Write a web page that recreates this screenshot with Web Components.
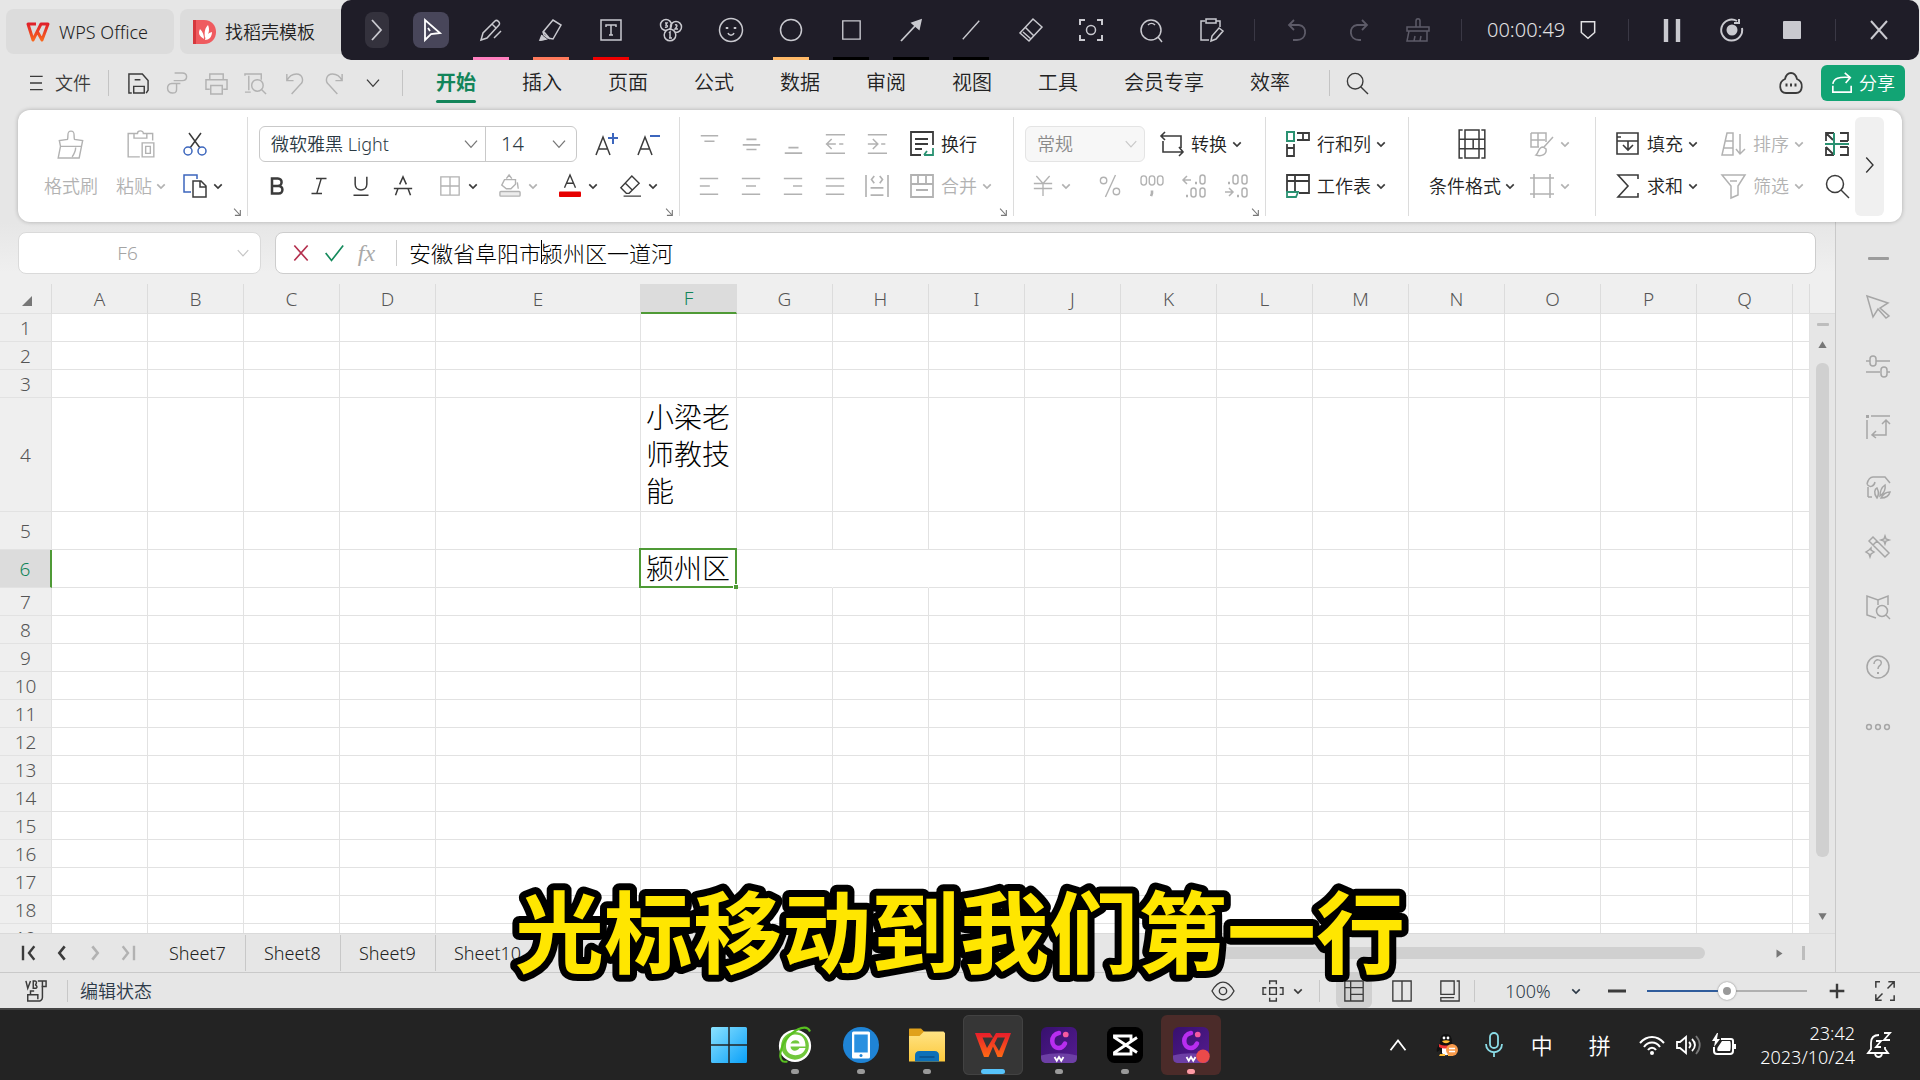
<!DOCTYPE html>
<html lang="zh-CN">
<head>
<meta charset="utf-8">
<title>WPS Office</title>
<style>
  html, body { height: 100%; margin: 0; }
  body {
    display: flex;
    flex-direction: column;
    position: relative;
    overflow: hidden;
    background: #e6e6e6;
    color: #2b2b2b;
    font: 350 18px/24px "Noto Sans", "Noto Sans CJK SC", sans-serif;
    --ink: #3b3b3b;
    --muted: #b2b2b2;
    --line: #cfcfcf;
    --grid: #e2e2e2;
    --green: #12855a;
    --select: #4f9a36;
    --blue: #3c66bd;
  }
  .workspace { flex: 1; display: flex; min-height: 0; }
  .document { flex: 1; min-width: 0; display: flex; flex-direction: column; background: linear-gradient(#e6e6e6, #efefef 50px); }
</style>
</head>
<body>
  <title-bar></title-bar>
  <menu-bar></menu-bar>
  <ribbon-bar></ribbon-bar>
  <div class="workspace">
    <div class="document">
      <formula-bar></formula-bar>
      <sheet-grid></sheet-grid>
      <sheet-tabs></sheet-tabs>
    </div>
    <side-rail></side-rail>
  </div>
  <status-bar></status-bar>
  <task-bar></task-bar>
  <video-caption text="光标移动到我们第一行"></video-caption>

<script>
const ICONS = {
  down: '<path stroke-width="2" d="M3 7l9 10 9-10"/>',
  downBold: '<path stroke-width="4" d="M3 8l9 9 9-9"/>',
  right: '<path stroke-width="1.800" d="M7 2l9 10-9 10"/>',
  leftBold: '<path stroke-width="4" d="M16 2L8 12l8 10"/>',
  rightBold: '<path stroke-width="4" d="M8 2l8 10-8 10"/>',
  firstBold: '<path stroke-width="3.600" d="M3 1v22M20 2l-8 10 8 10"/>',
  lastBold: '<path stroke-width="3.600" d="M21 1v22M4 2l8 10-8 10"/>',
  up: '<path stroke-width="2.4" d="M2 19L12 6l10 13"/>',
  corner: '<path stroke-width="2.6" d="M5 4l13 14M20 7v13H7"/>',
  triUp: '<path fill="currentColor" stroke="none" d="M12 3l11 18H1z"/>',
  triDown: '<path fill="currentColor" stroke="none" d="M12 21L1 3h22z"/>',
  triLeft: '<path fill="currentColor" stroke="none" d="M4 12L20 1v22z"/>',
  triRight: '<path fill="currentColor" stroke="none" d="M20 12L4 1v22z"/>',
  close: '<path stroke-width="2" d="M4 3l16 18M20 3L4 21"/>',
  check: '<path stroke-width="2" d="M2 12l7 9L23 3"/>',
  selectAll: '<path fill="currentColor" stroke="none" d="M24 0v24H0z"/>',

  // recorder
  cursor: '<path stroke-width="1.8" d="M6 2v20l6-6 9-1z M9 10l2 3"/>',
  pencil: '<path d="M2 22l2-7L16 3c2-2 6 2 4 4L8 20zM13 6l4 4M15 20l7-7"/>',
  marker: '<path d="M5 17l-1-3L14 2l8 5-8 14-5-1zM5 14l6 7M3 17l-2 5 6-1" /><path fill="currentColor" d="M3 18l4 3-5 1z"/>',
  textBox: '<path d="M2 2h20v20H2zM7 9V7h10v2M12 7v10M10 17h4"/>',
  steps: '<circle cx="7" cy="7" r="5.5"/><circle cx="17" cy="9" r="5.5"/><circle cx="11" cy="17" r="5.8" fill="#1f1d28"/><path d="M6 5h2l-1 2c2 0 2 3-1 2M16 7c3-1 2 2 0 4h3M10 15l1-1v6M10 20h3"/>',
  smile: '<circle cx="12" cy="12" r="11.5"/><path d="M9 15c1 3 5 3 6 0"/><path stroke-width="2.5" d="M8 9v2M16 9v2"/>',
  circle: '<circle cx="12" cy="12" r="10.5"/>',
  rect: '<path d="M3 2h19v20H3z"/>',
  arrow: '<path stroke-width="1.8" d="M2 23L17 7"/><path fill="currentColor" d="M22 2l-2 9-7-6z"/>',
  line: '<path d="M3 22L21 2"/>',
  eraser: '<path d="M14 1l9 8-13 14-9-8zM6 9l9 9M4 14l8 7"/>',
  focus: '<path stroke-width="2" d="M1 7V2h5M18 2h5v5M23 17v5h-5M6 22H1v-5"/><circle cx="12" cy="12" r="4.5"/>',
  zoomArc: '<circle cx="12" cy="12" r="10"/><path d="M9 7c2-2 5-2 7 0M19 19l4 5"/>',
  clip: '<path d="M6 3H2v19h8M17 3h4v6M7 1h10v4H7zM12 23l1-5 7-8 4 3-7 8z"/>',
  undo: '<path stroke-width="1.8" d="M8 2L3 7l5 5M3 7h10c9 1 8 15-2 15H7"/>',
  redo: '<path stroke-width="1.8" d="M16 2l5 5-5 5M21 7H11C2 8 3 22 13 22h2"/>',
  broom: '<path d="M10 9V3c0-3 4-3 4 0v6M1 9h22v4H1zM3 13l-2 10h20V13M8 23l1-5M14 23l1-5"/>',
  flag: '<path stroke-width="1.8" d="M4 2h16v13l-8 7-8-7z"/>',
  pause: '<path stroke-width="4.4" d="M6 1v23M18 1v23"/>',
  record: '<path stroke-width="2" d="M17 3a10.500 10.500 0 1 0 5 7M19 1l0 4-5 0"/><circle cx="12" cy="12" r="5.500" fill="currentColor" stroke="none"/>',
  stop: '<rect x="3" y="3" width="18" height="18" rx="1" fill="currentColor" stroke="none"/>',

  // menu
  menu: '<path stroke-width="2" d="M3 2h19M3 12h18M3 22h19"/>',
  save: '<path d="M5 22H2V2h14l6 7v10l-2 3M7 22v-7h11v7zM8 8h6"/>',
  link: '<path d="M8 9h9c6 0 6-8 0-8H9M15 12H6c-6 0-6 10 1 10 5 0 4-3 4-10"/>',
  print: '<path d="M5 8V2h14v6M5 18H1V8h22v10h-4M6 14h12v9H6z"/>',
  preview: '<path d="M7 21H1M5 19V4M1 4V2h17v6"/><circle cx="14" cy="14" r="6"/><path d="M18 18l5 5"/>',
  back: '<path d="M4 2v7h7M4 9c2-4 5-7 10-7 7 0 8 8 4 11l-9 10"/>',
  forward: '<path d="M21 2v7h-7M21 9c-2-4-5-7-10-7-7 0-8 8-4 11l9 10"/>',
  search: '<circle cx="10" cy="10" r="8.5"/><path d="M16 16l8 8"/>',
  cloud: '<path stroke-width="1.8" d="M6 8c2-8 10-8 12 0 7 3 6 14-1 14H7C0 22-1 11 6 8z"/><path stroke-width="3" d="M6.500 14h2M11 14h2M15.500 14h2"/>',
  share: '<path stroke-width="1.800" d="M2 15v7h20v-7M2 13C3 7 8 5 21 6M15 1l6 5-5 6"/>',

  // ribbon
  brush: '<path stroke-width="1.200" d="M9 8c1-3-1-7 3-7s2 4 3 7l7 1-1 5H3L2 9zM3 14L1 24h18l2-10M16 15c0 3-1 5-3 8"/>',
  paste: '<path stroke-width="1.200" d="M6 3H1v20h10M17 3h5v6M6 7h11V3h-3c0-3-5-3-5 0H6zM13 11h10v12H13zM16 14h4v6h-4z"/>',
  cut: '<path d="M6 1l11 15M18 1L7 16"/><g stroke="#3c66bd"><circle cx="5" cy="19" r="4"/><circle cx="19" cy="19" r="4"/></g>',
  copy: '<path stroke="#3c66bd" d="M8 18H1V1h13v4"/><path d="M10 7h8l5 5v11H10zM17 7v6h6"/>',
  growA: '<path d="M2 23L9 5l7 18M5 17h8"/><path stroke="#3c66bd" stroke-width="2" d="M14 6h10M19 1v11"/>',
  shrinkA: '<path d="M2 23L9 5l7 18M5 17h8"/><path stroke="#3c66bd" stroke-width="2" d="M14 4h10"/>',
  bold: '<path stroke-width="3" d="M6 3h7c6 0 6 9 0 9H6zM6 12h8c6 0 6 9 0 9H6z"/>',
  italic: '<path stroke-width="1.800" d="M8 2h14M2 22h14M15 2L9 22"/>',
  underline: '<path stroke-width="1.800" d="M5 1v9c0 9 14 9 14 0V1M3 23h18"/>',
  strike: '<path stroke-width="1.800" d="M1 15h22M8 10l4-9 4 9M6 15l-3 8M18 15l3 8"/>',
  border: '<path stroke="#b2b2b2" stroke-width="1.600" d="M1 1h22v22H1zM12 1v22M1 12h22"/>',
  fill: '<path d="M8 4l3-4 3 4M6 5h12v5l-5 5H8l-5-4zM20 8l1 7"/><rect x="1" y="18" width="22" height="5" rx="1" fill="#ececec"/>',
  fontColor: '<path d="M6 14l6-14 6 14M8 9h8"/><rect x="0" y="18" width="24" height="6" rx="1" fill="#e60000" stroke="none"/>',
  clear: '<path d="M14 1l8 8-11 11H8l-6-6zM7 9l8 8M5 23h19"/>',
  alignTop: '<path stroke-width="1.800" d="M3 3h19M7 9h11"/>',
  alignMid: '<path stroke-width="1.800" d="M7 7h11M3 13h19M7 18h11"/>',
  alignLow: '<path stroke-width="1.800" d="M7 16h11M3 22h19"/>',
  indentOut: '<path stroke-width="1.800" d="M1 1h23M1 23h23M1 12h12M8 6l-6 6 6 6M17 12h5"/>',
  indentIn: '<path stroke-width="1.800" d="M1 1h23M1 23h23M1 12h11M7 6l6 6-6 6M17 12h5"/>',
  left: '<path stroke-width="1.800" d="M1 3h22M1 12h12M1 22h22"/>',
  center: '<path stroke-width="1.800" d="M1 3h22M6 12h12M1 22h22"/>',
  rightAlign: '<path stroke-width="1.800" d="M1 3h22M12 12h11M1 22h22"/>',
  justify: '<path stroke-width="1.800" d="M1 3h22M1 12h22M1 22h22"/>',
  spread: '<path stroke-width="1.800" d="M0 0v24M24 0v24M5 14h14M5 22h14M9 1L6 5l3 4M15 1l3 4-3 4"/>',
  wrap: '<path stroke-width="1.800" d="M23 13V0H1v23h10M5 7h13M5 12h13M5 17h7"/><path stroke="#2a9272" stroke-width="1.800" d="M23 16v7h-9M17 19l-3 4"/>',
  merge: '<path stroke-width="1.800" d="M1 1h22v22H1zM1 10h22M8 1v9M16 1v9M6 16h12"/>',
  convert: '<path stroke-width="1.600" d="M5 0L1 4l4 4M1 4h20v12M19 15l4 5-4 4M22 20H3V9"/>',
  yen: '<path stroke-width="1.600" d="M4 0l8 9 8-9M1 9h22M1 15h22M12 9v15"/>',
  percent: '<circle cx="5" cy="6" r="3.500"/><circle cx="19" cy="18" r="3.500"/><path d="M18 0L7 24"/>',
  thousand: '<rect x="0" y="1" width="6" height="10" rx="3"/><rect x="9" y="1" width="6" height="10" rx="3"/><rect x="18" y="1" width="6" height="10" rx="3"/><path stroke-width="2.800" d="M12 17v3l-1 3"/>',
  decLess: '<path d="M9 6H1M5 2L1 6l4 4"/><rect x="18" y="1" width="5" height="9" rx="2.500"/><rect x="9" y="14" width="5" height="9" rx="2.500"/><rect x="18" y="14" width="5" height="9" rx="2.500"/><path stroke-width="2.500" d="M13 9h2M4 22h2"/>',
  decMore: '<path d="M1 18h8M5 14l4 4-4 4"/><rect x="9" y="1" width="5" height="9" rx="2.500"/><rect x="18" y="1" width="5" height="9" rx="2.500"/><rect x="18" y="14" width="5" height="9" rx="2.500"/><path stroke-width="2.500" d="M4 9h2M13 22h2"/>',
  rowCol: '<path stroke="#2a9272" stroke-width="2" d="M1 0h7v9H1z"/><path stroke-width="1.800" d="M11 1h12v7H11M17 1v7M1 12v12h7V12M1 16h7"/>',
  worksheet: '<path stroke-width="1.800" d="M1 18V1h22v18H13M1 7h22M9 1v17"/><path stroke="#2a9272" stroke-width="1.800" d="M1 18h11l-2 5H1z"/>',
  condition: '<path stroke-width="1.300" d="M4 0H1v24h3M20 0h3v24h-3M1 8h22M1 16h22M6 0h12v24H6zM13 8v8"/>',
  tableStyle: '<path d="M1 1h15v9M1 1v14h8M8 1v14M1 8h14M23 5l-9 10"/><path d="M13 15c-5 0-4 6-7 8 6 2 11-1 10-6z"/>',
  frame: '<path stroke-width="1.600" d="M0 4h24M0 20h24M4 0v24M20 0v24"/>',
  fillDown: '<path stroke-width="1.600" d="M5 5H1V1h21v8H1V5M1 9v13h21V9M12 9v9M7 13l5 5 5-5"/>',
  sum: '<path stroke-width="1.600" d="M22 5V1H2l10 11L2 23h20v-4"/>',
  sort: '<path stroke-width="1.500" d="M5 1h6v22H0zM3 9h8M2 16h9M18 2v20M14 17l4 5 5-5"/>',
  filter: '<path stroke-width="1.500" d="M0 1h23l-7 11v9l-7 3V12zM8 7h7"/>',
  freeze: '<path stroke-width="1.800" d="M9 1H1v8M15 1h8v8M1 15v8h8M15 23h8v-8M1 1l7 7M1 15l7 7M15 9h8M15 15h8"/><path stroke="#2a9272" stroke-width="2" d="M9 1v22M0 12h24"/>',

  // side rail
  pointer: '<path d="M1 1l21 7-8 5 9 8-3 2-8-9-5 8z"/>',
  sliders: '<path d="M0 6h4M10 6h14M0 17h14M21 17h3"/><rect x="4" y="1" width="6" height="10" rx="3"/><rect x="15" y="12" width="6" height="10" rx="3"/>',
  resize: '<path d="M5 1h19M1 5v19M6 20h14V6M10 16l-4 4 4 3M16 9l4-4 4 4"/><path stroke-width="3" d="M0 1.500h3"/>',
  leaf: '<path d="M2 22V12M2 22h4M1 9c1-4 3-7 6-7h12l5 6M1 9c2 4 7 3 8-2M11 23c-4-5-2-9 0-10 2 4 2 7 0 10zM14 21c0-6 2-9 5-11 1 5-1 8-5 11zM15 23c2-4 5-6 9-6-1 4-4 6-9 6z"/>',
  wand: '<path d="M3 6l4-4 16 16-4 4zM7 10l4-4M5 13v2l3 2-3 2-1 3-1-3-3-2 3-2zM19 1l1 3 3 1-3 1-1 3-1-3-3-1 3-1z"/>',
  book: '<path d="M10 23L1 20V1l11 4 10-4v9M12 5v5"/><circle cx="16" cy="16" r="5.500"/><path d="M20 20l4 4"/>',
  help: '<circle cx="12" cy="12" r="11"/><path d="M8 9c0-6 9-5 7 0-1 2-3 2-3 5"/><path stroke-width="2" d="M12 17v2"/>',
  more: '<circle cx="3" cy="12" r="2.400"/><circle cx="12" cy="12" r="2.400"/><circle cx="21" cy="12" r="2.400"/>',

  // status bar
  macro: '<path stroke-width="1.600" d="M1 1l2 8 3-8M9 1v8h3c2-1 1-3-1-4 2 0 2-4 0-4zM14 1h9v6h-5M19 1v18c0 3-3 4-4 4H3v-7h11v5M6 16v-4h4"/>',
  eye: '<path d="M0 12c7-13 17-13 24 0-7 13-17 13-24 0z"/><circle cx="12" cy="12" r="4"/>',
  cross: '<path stroke-width="1.700" d="M8 4V0h8v4M8 20v4h8v-4M4 8H0v8h4M20 8h4v8h-4M8 8h8v8H8z"/>',
  viewNormal: '<path stroke-width="1.600" d="M1 0h22v24H1zM1 8h22M8 0v24M8 16h15"/>',
  viewPage: '<path stroke-width="1.600" d="M1 0h22v24H1zM12 0v24"/>',
  viewBreak: '<path stroke-width="1.600" d="M1 0h16v16H1zM20 0h3v24H1v-4h16"/>',
  minus: '<path stroke-width="4" d="M0 12h24"/>',
  plus: '<path stroke-width="3.600" d="M1 12h22M12 1v22"/>',
  expand: '<path stroke-width="1.800" d="M1 8V1h5M16 1h7v7M23 1l-8 8M1 16v7h7M1 23l8-8M23 17v6h-5"/>',

  // brands
  wps: '<defs><linearGradient id="w" x2="0" y2="1"><stop stop-color="#e0202a"/><stop offset="1" stop-color="#f8661e"/></linearGradient></defs><path stroke="url(#w)" stroke-width="3" stroke-linejoin="round" d="M10 4H2l5 16 8-16h7l-6 16-5-9"/>',
  docer: '<path fill="#ef5b5f" stroke="none" d="M1 0h11c16 0 16 24 0 24H1z"/><path fill="#d6383d" stroke="none" d="M1 0h3v24H1z"/><path fill="#fff" stroke="none" d="M12 19c-5-3-6-6-4-10 3 3 4 6 4 10zM13 18c-1-6 0-10 3-13 2 5 1 9-3 13zM13 20c1-5 3-7 7-8 0 5-3 8-7 8z"/>',
  windows: '<defs><linearGradient id="m" x2="1" y2="1"><stop stop-color="#8be2ff"/><stop offset="1" stop-color="#0aa0f8"/></linearGradient></defs><path fill="url(#m)" stroke="none" d="M0 1a1 1 0 0 1 1-1h10.500v11.500H0zM12.500 0H23a1 1 0 0 1 1 1v10.500H12.500zM0 12.500h11.500V24H1a1 1 0 0 1-1-1zM12.500 12.500H24V23a1 1 0 0 1-1 1H12.500z"/>',
  browser: '<circle cx="12" cy="12.500" r="10" fill="#71c83c" stroke="#fff"/><path fill="#fff" stroke="none" d="M12 5c5 0 7 3 7 8H9c0 3 4 4 6 1h4c-2 7-13 6-13-1 0-5 3-8 6-8zM9 11h6c0-3-5-3-6 0z"/><path stroke="#58c020" stroke-width="1.400" d="M22 3c-2-5-9-2-14 3S1 19 3 22c1 2 3 1 4 1"/>',
  phone: '<circle cx="12" cy="12" r="12" fill="#1f84d6" stroke="none"/><rect x="6" y="3" width="12" height="18" rx="1" fill="#fff" stroke="none"/><path fill="#2990e0" stroke="none" d="M7.500 5h9v12h-9z"/><circle cx="12" cy="19" r="1" fill="#1f84d6" stroke="none"/>',
  folder: '<defs><linearGradient id="f" x2="0" y2="1"><stop stop-color="#ffe384"/><stop offset="1" stop-color="#fcc93c"/></linearGradient></defs><path fill="#e0a11b" stroke="none" d="M0 2c0-1 0-1 1-1h7l3 3v4H0z"/><path fill="url(#f)" stroke="none" d="M0 6h7l3-3h13l1 1v19H0z"/><path fill="#0d70b8" stroke="none" d="M4 23v-4c0-2 1-3 3-3h10c2 0 3 1 3 3v4z"/><path stroke="#0a4f88" stroke-width="1" d="M7 20h10"/>',
  wpsBig: '<defs><linearGradient id="v" x2="0" y2="1"><stop stop-color="#e81d2b"/><stop offset="1" stop-color="#ff6a14"/></linearGradient></defs><path fill="url(#v)" stroke="none" d="M0 4h10l2 3H5l3 7 6-10h10l-6 16h-3l-3-7-3 7H6zM15 7l-2 4 3 5 4-9z"/>',
  demo: '<defs><linearGradient id="d" x2="1" y2="1"><stop stop-color="#37106e"/><stop offset="1" stop-color="#551c90"/></linearGradient></defs><rect width="24" height="24" rx="4" fill="url(#d)" stroke="none"/><path fill="#6d3fa5" stroke="none" d="M0 19c8-2 16-2 24 0v1c0 3-1 4-4 4H4c-3 0-4-1-4-4z"/><path stroke="#b82df0" stroke-width="3" stroke-linecap="round" d="M12 4c-6 1-6 10 0 10 2 0 3-1 4-3"/><circle cx="16.500" cy="5" r="1.900" fill="#f65aa0" stroke="none"/><path stroke="#fff" stroke-width="1.200" d="M9 20l1.500 2.500L12 20l1.500 2.500L15 20"/>',
  capcut: '<rect width="24" height="24" rx="5" fill="#000" stroke="none"/><path stroke="#fff" stroke-width="1.900" d="M20 7L5 17v1h11v-3M20 17L5 7V6h11v3"/>',
  qq: '<path fill="#111" stroke="none" d="M12 1c6 0 6 6 6 9 3 4 4 7 3 9l-3-2-2 5H8l-2-5-3 2c-1-2 0-5 3-9 0-3 0-9 6-9z"/><path fill="#fff" stroke="none" d="M8 14h8v6c-2 3-6 3-8 0z"/><path fill="#e33" stroke="none" d="M5 11c4 2 10 2 14 0v3c-4 2-10 2-14 0z"/><path fill="#fb3" stroke="none" d="M8 8c3-1 5-1 8 0-2 3-6 3-8 0zM6 21h5v2H5zM14 21h5v2h-5z"/><circle cx="10" cy="5" r="1.400" fill="#fff" stroke="none"/><circle cx="14" cy="5" r="1.400" fill="#fff" stroke="none"/><circle cx="18" cy="17" r="6" fill="#f79a4b" stroke="none"/><path stroke="#fff" d="M15 15.500h6M15 18.500h6"/>',
  mic: '<rect x="8" y="0" width="8" height="15" rx="4" stroke-width="1.800"/><path stroke-width="1.800" d="M4 11c0 11 16 11 16 0M12 19v5"/>',
  wifi: '<path stroke-width="2" d="M0 10c7-8 17-8 24 0M4 14c4-6 12-6 16 0M8 17c2-3 6-3 8 0"/><circle cx="12" cy="20" r="2" fill="currentColor" stroke="none"/>',
  volume: '<path stroke-width="1.800" d="M1 9h3l6-5v16l-6-5H1zM13 9c2 2 2 4 0 6M16 6c4 4 4 8 0 12"/><path stroke="#777" stroke-width="1.800" d="M20 3c5 6 5 12 0 18"/>',
  battery: '<path stroke-width="2" d="M9 6h10c2 0 2 1 2 2v10c0 2-1 3-3 3H5c-2 0-3-1-3-3v-4"/><path fill="currentColor" stroke="none" d="M10 8h8c1 0 1 9 0 10H6c-1 0-1-3 0-4zM5 0L0 8h3l-1 6 6-8H5l1-6zM22 11h2v5h-2z"/>',
  bell: '<path stroke-width="1.800" d="M12 2C7 2 4 5 4 10v6l-3 4h20l-3-4v-2M8 21c1 4 6 4 7 0M9 8h5l-5 6h5M17 0h6l-6 7h6"/>'
};
ICONS.demoRec = ICONS.demo + '<circle cx="20" cy="19.500" r="4.500" fill="#ea4a4a" stroke="none"/>';

class AppIcon extends HTMLElement {
  constructor() {
    super();
    this.attachShadow({ mode: "open" });
  }

  connectedCallback() {
    const size = this.getAttribute("size") || 24;
    this.shadowRoot.innerHTML = `
      <style>
        :host { display: inline-flex; flex: none; }
        svg { display: block; overflow: visible; }
      </style>
      <svg width="${size}" height="${size}" viewBox="0 0 24 24" fill="none" stroke="currentColor" stroke-width="1.5" aria-hidden="true">${ICONS[this.getAttribute("name")] || ""}</svg>
    `;
  }
}
customElements.define("app-icon", AppIcon);

class ToolButton extends HTMLElement {
  constructor() {
    super();
    this.attachShadow({ mode: "open" });
  }

  connectedCallback() {
    const icon = this.getAttribute("icon");
    const label = this.getAttribute("label");
    const big = this.hasAttribute("big");
    const off = this.hasAttribute("off");
    const drop = this.hasAttribute("drop") ? '<app-icon name="downBold" size="10"></app-icon>' : "";
    const text = label ? `<span class="text">${label}</span>` : "";

    this.shadowRoot.innerHTML = `
      <style>
        :host { display: block; flex: none; }
        button {
          display: flex;
          align-items: center;
          height: 36px;
          padding: 0;
          border: 0;
          background: none;
          color: ${off ? "var(--muted)" : "var(--ink)"};
          font: inherit;
          white-space: nowrap;
        }
        .icon { display: flex; justify-content: center; width: 36px; }
        button.labelled { padding: 0 9px; gap: 5px; }
        .labelled .icon { width: 26px; justify-content: flex-start; }
        .text { color: ${off ? "var(--muted)" : "#222"}; }
        button.big { flex-direction: column; height: 78px; gap: 6px; padding: 0; }
        .big .icon { height: 36px; width: auto; align-items: center; }
        .big .row { display: flex; align-items: center; gap: 4px; height: 36px; }
      </style>
      <button type="button" class="${big ? "big" : label ? "labelled" : ""}" aria-label="${label || icon}">
        <span class="icon"><app-icon name="${icon}" size="${big ? 28 : this.getAttribute("size") || 24}"></app-icon></span>
        ${big ? `<span class="row">${text}${drop}</span>` : text + drop}
      </button>
    `;
  }
}
customElements.define("tool-button", ToolButton);

class TitleBar extends HTMLElement {
  constructor() {
    super();
    this.attachShadow({ mode: "open" });
  }

  connectedCallback() {
    const tools = [
      ["pencil", "#ff7fbf"], ["marker", "#ff7a5c"], ["textBox", "#f00000"], ["steps"], ["smile"],
      ["circle", "#ffb968"], ["rect", "#000"], ["arrow", "#000"], ["line", "#000"], ["eraser"],
      ["focus"], ["zoomArc"], ["clip"]
    ];
    const button = (name, color, cls = "") =>
      `<button type="button" class="${cls}" aria-label="${name}" style="border-color:${color || "transparent"}"><span><app-icon name="${name}" size="${name === "rect" || name === "line" ? 22 : 24}"></app-icon></span></button>`;

    this.shadowRoot.innerHTML = `
      <style>
        :host { display: flex; height: 60px; }
        nav { width: 341px; box-sizing: border-box; padding: 9px 0 6px 6px; display: flex; gap: 6px; overflow: hidden; }
        a {
          flex: none;
          display: flex;
          align-items: center;
          gap: 9px;
          width: 148px;
          padding: 0 0 0 20px;
          border-radius: 8px;
          background: #dcdcdc;
          color: #222;
          text-decoration: none;
        }
        a + a { padding-left: 12px; width: 180px; }
        .recorder {
          flex: 1;
          display: flex;
          justify-content: space-between;
          margin-right: 1px;
          padding: 0 22px 0 24px;
          border-radius: 10px;
          background: #1f1d28;
          color: #c9c9cf;
        }
        .group { display: flex; align-items: center; gap: 24px; }
        button {
          box-sizing: border-box;
          width: 36px;
          height: 60px;
          padding: 3px 0 0;
          border: 0 solid transparent;
          border-bottom-width: 3px;
          background: none;
          color: inherit;
        }
        button span { display: flex; align-items: center; justify-content: center; height: 36px; border-radius: 8px; }
        .expand { width: 24px; }
        .expand span { background: #34323d; }
        .active { color: #fff; }
        .active span { background: #48465a; }
        .dim { color: #5d5b68; }
        i { width: 1px; height: 22px; margin: 0 1px; background: #3a3845; }
        .time { display: flex; align-items: center; gap: 13px; color: #e2e2e4; font-size: 20px; }
      </style>
      <nav>
        <a href="#home"><app-icon name="wps"></app-icon>WPS Office</a>
        <a href="#docer"><app-icon name="docer"></app-icon>找稻壳模板</a>
      </nav>
      <div class="recorder">
        <div class="group">
          ${button("right", "", "expand")}
          ${button("cursor", "", "active")}
          ${tools.map(([name, color]) => button(name, color)).join("")}
          <i></i>
          ${["undo", "redo", "broom"].map(name => button(name, "", "dim")).join("")}
          <i></i>
          <span class="time">00:00:49<app-icon name="flag" size="20"></app-icon></span>
        </div>
        <div class="group">
          <i></i>${button("pause")}${button("record")}${button("stop")}<i></i>${button("close")}
        </div>
      </div>
    `;
  }
}
customElements.define("title-bar", TitleBar);

class MenuBar extends HTMLElement {
  constructor() {
    super();
    this.attachShadow({ mode: "open" });
  }

  connectedCallback() {
    const tabs = ["开始", "插入", "页面", "公式", "数据", "审阅", "视图", "工具", "会员专享", "效率"];
    const quick = ["save", "link", "print", "preview", "back", "forward", "down"];

    this.shadowRoot.innerHTML = `
      <style>
        :host { display: flex; align-items: center; height: 46px; padding: 0 15px 4px 28px; }
        button { display: flex; align-items: center; justify-content: center; border: 0; padding: 0; background: none; color: var(--ink); font: inherit; }
        .file { gap: 11px; height: 36px; }
        .quick button { width: 39px; height: 36px; color: var(--muted); }
        .quick button:first-child, .quick button:last-child { color: var(--ink); }
        .quick, nav { display: flex; }
        .quick { margin: 0 10px; }
        i { width: 1px; height: 26px; background: #c4c4c4; }
        .file + i { margin-left: 17px; }
        nav { padding: 0 16px 0 10px; }
        a { position: relative; padding: 8px 23px; font-size: 20px; color: #222; text-decoration: none; }
        a.on { color: var(--green); font-weight: 700; }
        a.on::after { content: ""; position: absolute; left: 23px; right: 23px; bottom: 0; height: 3px; border-radius: 2px; background: var(--green); }
        .find { width: 54px; }
        .cloud { margin-left: auto; width: 60px; }
        .share { gap: 6px; width: 84px; height: 36px; border-radius: 6px; background: #12a474; color: #fff; }
      </style>
      <button class="file" type="button"><app-icon name="menu" size="16"></app-icon>文件</button>
      <i></i>
      <div class="quick">
        ${quick.map(name => `<button type="button" aria-label="${name}"><app-icon name="${name}" size="${name === "down" ? 16 : 23}"></app-icon></button>`).join("")}
      </div>
      <i></i>
      <nav>${tabs.map((tab, n) => `<a href="#tab${n}" class="${n ? "" : "on"}">${tab}</a>`).join("")}</nav>
      <i></i>
      <button class="find" type="button" aria-label="search"><app-icon name="search" size="22"></app-icon></button>
      <button class="cloud" type="button" aria-label="cloud"><app-icon name="cloud"></app-icon></button>
      <button class="share" type="button"><app-icon name="share" size="22"></app-icon>分享</button>
    `;
  }
}
customElements.define("menu-bar", MenuBar);

class RibbonGroup extends HTMLElement {
  constructor() {
    super();
    this.attachShadow({ mode: "open" });
  }

  connectedCallback() {
    const launcher = this.hasAttribute("launcher") ? '<button type="button" aria-label="more"><app-icon name="corner" size="10"></app-icon></button>' : "";
    this.shadowRoot.innerHTML = `
      <style>
        :host { display: flex; position: relative; padding: 9px 11px 0; border-right: 1px solid #dcdcdc; }
        :host([last]) { padding-right: 0; border: 0; }
        button { position: absolute; right: 5px; bottom: -4px; padding: 0; border: 0; background: none; color: #777; }
      </style>
      <slot></slot>${launcher}
    `;
  }
}
customElements.define("ribbon-group", RibbonGroup);

class RibbonBar extends HTMLElement {
  constructor() {
    super();
    this.attachShadow({ mode: "open" });
  }

  connectedCallback() {
    this.shadowRoot.innerHTML = `
      <style>
        :host {
          display: grid;
          grid-template-columns: 230px 432px 334px 252px 143px 187px minmax(0, 1fr) 29px;
          box-sizing: border-box;
          height: 112px;
          margin: 0 18px;
          padding: 7px 18px 6px 0;
          border-radius: 12px;
          background: #fff;
          box-shadow: 0 0 4px rgba(0, 0, 0, .25);
          position: relative;
        }
        .stack { display: flex; flex-direction: column; gap: 6px; flex: 1; }
        .row { display: flex; gap: 6px; height: 36px; }
        .split { justify-content: space-between; }
        .clipboard { gap: 18px; padding: 0 11px 0 15px; }
        .narrow { display: flex; padding: 0 9px; }
        .loose { gap: 14px; }
        .fields { display: flex; flex: none; width: 318px; box-sizing: border-box; border: 1px solid #c9c9c9; border-radius: 6px; margin-right: 5px; }
        label { position: relative; display: flex; align-items: center; }
        label app-icon { position: absolute; right: 6px; color: #777; pointer-events: none; }
        label.face { flex: 1; }
        label.size { width: 90px; border-left: 1px solid #c9c9c9; }
        select { appearance: none; width: 100%; height: 34px; padding: 0 0 0 11px; border: 0; background: none; color: #2b3a44; font: inherit; }
        label.size select { padding-left: 15px; font-size: 20px; }
        label.size app-icon { right: 9px; }
        label.number { width: 120px; box-sizing: border-box; border: 1px solid #e4e4e4; border-radius: 6px; background: #f7f7f7; }
        label.number select { color: #8a8a8a; }
        label.number app-icon { color: #c8c8c8; }
        .scroll { border: 0; border-radius: 6px; background: #f0f0f0; padding: 0 6px; color: #333; }
      </style>
      <ribbon-group launcher>
        <div class="row clipboard">
          <tool-button icon="brush" label="格式刷" big off></tool-button>
          <tool-button icon="paste" label="粘贴" big off drop></tool-button>
        </div>
        <div class="stack">
          <tool-button icon="cut"></tool-button>
          <tool-button icon="copy" drop></tool-button>
        </div>
      </ribbon-group>
      <ribbon-group launcher>
        <div class="stack">
          <div class="row">
            <div class="fields">
              <label class="face"><select aria-label="字体"><option>微软雅黑 Light</option></select><app-icon name="down" size="16"></app-icon></label>
              <label class="size"><select aria-label="字号"><option>14</option></select><app-icon name="down" size="16"></app-icon></label>
            </div>
            <tool-button icon="growA"></tool-button>
            <tool-button icon="shrinkA"></tool-button>
          </div>
          <div class="row split">
            <div class="row">
              <tool-button icon="bold" size="20"></tool-button>
              <tool-button icon="italic" size="18"></tool-button>
              <tool-button icon="underline" size="20"></tool-button>
              <tool-button icon="strike" size="20"></tool-button>
            </div>
            <div class="row loose">
              <tool-button icon="border" size="20" drop></tool-button>
              <tool-button icon="fill" size="22" drop off></tool-button>
              <tool-button icon="fontColor" size="22" drop></tool-button>
              <tool-button icon="clear" size="22" drop></tool-button>
            </div>
            <span></span>
          </div>
        </div>
      </ribbon-group>
      <ribbon-group launcher>
        <div class="stack">
          <div class="row">
            <tool-button icon="alignTop" size="22" off></tool-button>
            <tool-button icon="alignMid" size="22" off></tool-button>
            <tool-button icon="alignLow" size="22" off></tool-button>
            <tool-button icon="indentOut" size="20" off></tool-button>
            <tool-button icon="indentIn" size="20" off></tool-button>
            <tool-button icon="wrap" label="换行"></tool-button>
          </div>
          <div class="row">
            <tool-button icon="left" size="20" off></tool-button>
            <tool-button icon="center" size="20" off></tool-button>
            <tool-button icon="rightAlign" size="20" off></tool-button>
            <tool-button icon="justify" size="20" off></tool-button>
            <tool-button icon="spread" size="22" off></tool-button>
            <tool-button icon="merge" label="合并" off drop></tool-button>
          </div>
        </div>
      </ribbon-group>
      <ribbon-group launcher>
        <div class="stack">
          <div class="row">
            <label class="number"><select aria-label="数字格式"><option>常规</option></select><app-icon name="down" size="14"></app-icon></label>
            <tool-button icon="convert" label="转换" drop></tool-button>
          </div>
          <div class="row split">
            <tool-button icon="yen" size="20" off drop></tool-button>
            <div class="row">
              <tool-button icon="percent" size="22" off></tool-button>
              <tool-button icon="thousand" size="22" off></tool-button>
              <tool-button icon="decLess" size="24" off></tool-button>
              <tool-button icon="decMore" size="24" off></tool-button>
            </div>
          </div>
        </div>
      </ribbon-group>
      <ribbon-group>
        <div class="stack">
          <tool-button icon="rowCol" label="行和列" drop></tool-button>
          <tool-button icon="worksheet" label="工作表" drop></tool-button>
        </div>
      </ribbon-group>
      <ribbon-group>
        <div class="narrow">
          <tool-button icon="condition" label="条件格式" big drop></tool-button>
        </div>
        <div class="stack">
          <tool-button icon="tableStyle" off drop></tool-button>
          <tool-button icon="frame" off drop></tool-button>
        </div>
      </ribbon-group>
      <ribbon-group last>
        <div class="stack">
          <div class="row">
            <tool-button icon="fillDown" label="填充" drop></tool-button>
            <tool-button icon="sort" label="排序" off drop></tool-button>
            <tool-button icon="freeze"></tool-button>
          </div>
          <div class="row">
            <tool-button icon="sum" label="求和" drop></tool-button>
            <tool-button icon="filter" label="筛选" off drop></tool-button>
            <tool-button icon="search"></tool-button>
          </div>
        </div>
      </ribbon-group>
      <button class="scroll" type="button" aria-label="scroll"><app-icon name="right" size="18"></app-icon></button>
    `;
  }
}
customElements.define("ribbon-bar", RibbonBar);

class FormulaBar extends HTMLElement {
  constructor() {
    super();
    this.attachShadow({ mode: "open" });
  }

  connectedCallback() {
    this.shadowRoot.innerHTML = `
      <style>
        :host { display: flex; gap: 14px; padding: 10px 19px 10px 18px; }
        div { display: flex; align-items: center; box-sizing: border-box; height: 42px; border: 1px solid #cdcdcd; border-radius: 8px; background: #fff; }
        input { min-width: 0; padding: 0; border: 0; outline: 0; background: none; font: inherit; }
        .name { width: 243px; padding-right: 10px; border-color: #dadada; color: #c6c6c6; }
        .name input { flex: 1; text-align: center; color: #a4a4a4; font-size: 19px; }
        .edit { flex: 1; padding-left: 8px; }
        button { display: flex; align-items: center; justify-content: center; width: 33px; height: 36px; padding: 0; border: 0; background: none; color: #a9a9a9; font: italic 24px "Liberation Serif", serif; }
        .no { color: #b4304e; }
        .ok { color: #148a5c; }
        .text { position: relative; flex: 1; height: 26px; margin-left: 13px; padding-left: 12px; border: 0; border-left: 1px solid #cdcdcd; border-radius: 0; font-size: 22px; font-weight: 300; }
        .text input { width: 100%; height: 26px; color: #000; line-height: 26px; }
        .caret { position: absolute; left: calc(12px + 6em); top: 0; width: 1px; height: 24px; background: #000; }
      </style>
      <div class="name"><input aria-label="名称框" value="F6"><app-icon name="down" size="14"></app-icon></div>
      <div class="edit">
        <button class="no" type="button" aria-label="取消"><app-icon name="close" size="20"></app-icon></button>
        <button class="ok" type="button" aria-label="输入"><app-icon name="check" size="20"></app-icon></button>
        <button type="button">fx</button>
        <div class="text"><input aria-label="编辑栏" value="安徽省阜阳市颍州区一道河"><span class="caret"></span></div>
      </div>
    `;
  }
}
customElements.define("formula-bar", FormulaBar);

class SheetGrid extends HTMLElement {
  constructor() {
    super();
    this.attachShadow({ mode: "open" });
  }

  connectedCallback() {
    const columns = [..."ABCDEFGHIJKLMNOPQ"];
    const heights = { 4: "tall", 5: "mid", 6: "mid" };
    const cells = { F4: "小梁老师教技能", F6: "颍州区" };
    let rows = "";
    for (let r = 1; r <= 19; r++) {
      const tds = columns.map(c => {
        const id = c + r;
        const cls = id === "F6" ? "current" : id === "G6" || id === "H6" ? "open" : "";
        return `<td class="${cls}">${cells[id] || ""}${cls === "current" ? "<i></i>" : ""}</td>`;
      }).join("");
      rows += `<tr class="${heights[r] || ""}"><th class="${r === 6 ? "on" : ""}">${r}</th>${tds}<td></td></tr>`;
    }

    this.shadowRoot.innerHTML = `
      <style>
        :host { flex: 1; display: flex; min-height: 0; overflow: hidden; }
        .view { flex: 1; min-width: 0; overflow: hidden; background: #fff; }
        table { width: 100%; table-layout: fixed; border-spacing: 0; }
        th, td { box-sizing: border-box; height: 28px; padding: 0; border: 0 solid var(--grid); border-width: 0 1px 1px 0; }
        th { background: #efefef; color: #555; font-weight: inherit; font-size: 19px; line-height: 24px; }
        thead th { height: 30px; border-right-color: #dcdcdc; }
        th app-icon { color: #777; margin-left: 2px; }
        .on { background: #dcdcdc; color: var(--green); }
        thead .on { border-bottom: 2px solid var(--select); }
        tbody .on { border-right: 2px solid var(--select); }
        .tall th, .tall td { height: 114px; }
        .mid th, .mid td { height: 38px; }
        td { padding-left: 5px; color: #000; font-size: 28px; line-height: 37px; font-weight: 300; }
        .open { border-right-color: transparent; }
        .current { position: relative; border-right-color: var(--select); }
        .current i { position: absolute; inset: -2px -1px -1px -2px; border: 2px solid var(--select); }
        .current i::after { content: ""; position: absolute; right: -3px; bottom: -3px; width: 4px; height: 4px; border: solid #fff; border-width: 1px 0 0 1px; background: var(--select); }
        .scroll { display: flex; flex-direction: column; align-items: center; width: 25px; background: #e6e6e6; color: #777; }
        .cap { align-self: stretch; height: 29px; border-bottom: 1px solid #dcdcdc; background: #efefef; }
        .grip { width: 12px; height: 3px; margin: 9px 0 14px; border-radius: 1px; background: #bdbdbd; }
        .track { flex: 1; align-self: stretch; margin: 14px 6px 12px; }
        .thumb { height: 92%; border-radius: 6px; background: #d0d0d0; }
        .scroll app-icon:last-child { margin-bottom: 12px; }
      </style>
      <div class="view">
        <table>
          <colgroup><col style="width:52px">${columns.map(c => `<col style="width:${c === "E" ? 205 : 96}px">`).join("")}<col></colgroup>
          <thead><tr><th><app-icon name="selectAll" size="10"></app-icon></th>${columns.map(c => `<th class="${c === "F" ? "on" : ""}">${c}</th>`).join("")}<th></th></tr></thead>
          <tbody>${rows}</tbody>
        </table>
      </div>
      <div class="scroll">
        <div class="cap"></div>
        <div class="grip"></div>
        <app-icon name="triUp" size="9"></app-icon>
        <div class="track"><div class="thumb"></div></div>
        <app-icon name="triDown" size="9"></app-icon>
      </div>
    `;
  }
}
customElements.define("sheet-grid", SheetGrid);

class SheetTabs extends HTMLElement {
  constructor() {
    super();
    this.attachShadow({ mode: "open" });
  }

  connectedCallback() {
    this.shadowRoot.innerHTML = `
      <style>
        :host { display: flex; align-items: center; height: 38px; padding: 0 30px 0 12px; border-top: 1px solid #dadada; background: #e6e6e6; }
        button { display: flex; justify-content: center; width: 33px; padding: 0; border: 0; background: none; color: var(--ink); }
        button.off { color: var(--muted); }
        nav { display: flex; flex: 1; padding-left: 7px; }
        a { min-width: 58px; padding: 6px 18px; border-right: 1px solid #c8c8c8; color: #222; text-decoration: none; }
        a:last-child { border: 0; }
        .scroll { display: flex; align-items: center; width: 38%; color: #777; }
        .track { flex: 1; padding: 0 70px 0 10px; }
        .thumb { height: 12px; border-radius: 6px; background: #d0d0d0; }
        .grip { width: 3px; height: 14px; margin-left: 18px; background: #bdbdbd; }
      </style>
      <button type="button" aria-label="first"><app-icon name="firstBold" size="16"></app-icon></button>
      <button type="button" aria-label="previous"><app-icon name="leftBold" size="16"></app-icon></button>
      <button type="button" aria-label="next" class="off"><app-icon name="rightBold" size="16"></app-icon></button>
      <button type="button" aria-label="last" class="off"><app-icon name="lastBold" size="16"></app-icon></button>
      <nav>${["Sheet7", "Sheet8", "Sheet9", "Sheet10"].map(name => `<a href="#${name}">${name}</a>`).join("")}</nav>
      <div class="scroll">
        <app-icon name="triLeft" size="9"></app-icon>
        <div class="track"><div class="thumb"></div></div>
        <app-icon name="triRight" size="9"></app-icon>
        <div class="grip"></div>
      </div>
    `;
  }
}
customElements.define("sheet-tabs", SheetTabs);

class SideRail extends HTMLElement {
  constructor() {
    super();
    this.attachShadow({ mode: "open" });
  }

  connectedCallback() {
    const names = ["pointer", "sliders", "resize", "leaf", "wand", "book", "help", "more"];
    this.shadowRoot.innerHTML = `
      <style>
        :host { display: flex; flex-direction: column; align-items: center; width: 84px; padding-top: 35px; border-left: 1px solid #c9c9c9; color: #a6a6a6; }
        i { width: 21px; height: 3px; margin-bottom: 17px; border-radius: 1px; background: #9c9c9c; }
        button { display: flex; align-items: center; justify-content: center; width: 60px; height: 60px; padding: 0; border: 0; background: none; color: inherit; }
      </style>
      <i></i>
      ${names.map(name => `<button type="button" aria-label="${name}"><app-icon name="${name}"></app-icon></button>`).join("")}
    `;
  }
}
customElements.define("side-rail", SideRail);

class StatusBar extends HTMLElement {
  constructor() {
    super();
    this.attachShadow({ mode: "open" });
  }

  connectedCallback() {
    this.shadowRoot.innerHTML = `
      <style>
        :host { display: flex; align-items: center; height: 35px; border-top: 1px solid #c9c9c9; padding: 0 11px 0 12px; color: #2d3a48; }
        button { display: flex; align-items: center; justify-content: center; gap: 10px; width: 48px; height: 35px; padding: 0; border: 0; background: none; color: var(--ink); font: inherit; }
        .state { flex: 1; margin-left: 12px; }
        i { width: 1px; height: 22px; background: #c8c8c8; }
        i.first { margin-left: 7px; }
        .wide { width: 72px; }
        .view { width: 36px; margin: 0 6px 0 16px; border-radius: 6px; background: #d0d0d0; }
        .zoom { box-sizing: border-box; width: 118px; padding-left: 18px; gap: 20px; color: #2d3a48; }
        input { appearance: none; width: 160px; height: 20px; margin: 0 6px; background: linear-gradient(90deg, #2f5c9c 50%, #b0b0b0 50%) center / 100% 2px no-repeat; }
        input::-webkit-slider-thumb { appearance: none; box-sizing: border-box; width: 18px; height: 18px; border: 5px solid #fff; border-radius: 50%; background: #999; box-shadow: 0 0 2px #777; }
      </style>
      <button type="button" aria-label="macro"><app-icon name="macro" size="22"></app-icon></button>
      <i class="first"></i>
      <span class="state">编辑状态</span>
      <button type="button" aria-label="eye"><app-icon name="eye" size="22"></app-icon></button>
      <button type="button" class="wide" aria-label="cross"><app-icon name="cross" size="20"></app-icon><app-icon name="downBold" size="10"></app-icon></button>
      <i></i>
      <button type="button" class="view" aria-label="普通视图"><app-icon name="viewNormal" size="20"></app-icon></button>
      <button type="button" aria-label="分页预览"><app-icon name="viewPage" size="20"></app-icon></button>
      <button type="button" aria-label="页面布局"><app-icon name="viewBreak" size="20"></app-icon></button>
      <i></i>
      <button type="button" class="zoom">100%<app-icon name="downBold" size="10"></app-icon></button>
      <button type="button" aria-label="缩小"><app-icon name="minus" size="18"></app-icon></button>
      <input type="range" min="0" max="100" value="50" aria-label="缩放">
      <button type="button" aria-label="放大"><app-icon name="plus" size="16"></app-icon></button>
      <button type="button" aria-label="全屏"><app-icon name="expand" size="20"></app-icon></button>
    `;
  }
}
customElements.define("status-bar", StatusBar);

class TaskBar extends HTMLElement {
  constructor() {
    super();
    this.attachShadow({ mode: "open" });
  }

  connectedCallback() {
    const apps = [["windows", ""], ["browser", "run"], ["phone", "run"], ["folder", "run"], ["wpsBig", "run front"], ["demo", "run"], ["capcut", "run"], ["demoRec", "run alert"]];
    this.shadowRoot.innerHTML = `
      <style>
        :host { display: grid; grid-template-columns: 1fr auto 1fr; align-items: center; height: 70px; border-top: 2px solid #444; background: #232323; color: #fff; }
        .apps { grid-column: 2; display: flex; gap: 6px; }
        button { position: relative; display: flex; align-items: center; justify-content: center; height: 60px; padding: 0; border: 0; border-radius: 6px; background: none; color: inherit; font: inherit; }
        .apps button { width: 60px; }
        .run::after { content: ""; position: absolute; bottom: 1px; left: 26px; right: 26px; height: 5px; border-radius: 3px; background: #9a9a9a; }
        .front { background: #363636; box-shadow: inset 0 0 0 1px #424242; }
        .front::after { left: 18px; right: 18px; background: #57c3fa; }
        .alert { background: #4b2b29; }
        .alert::after { background: #ff9ba5; }
        .tray { display: flex; align-items: center; justify-content: flex-end; padding-right: 23px; }
        .tray button { width: 36px; }
        .tray .item { width: 48px; }
        .tray .ime { width: 47px; margin-right: 11px; font-size: 22px; }
        .tray .mic { color: #8adbe6; }
        .clock { margin: 0 6px 0 18px; text-align: right; font-size: 18px; }
      </style>
      <div class="apps">
        ${apps.map(([name, cls]) => `<button type="button" class="${cls}" aria-label="${name}"><app-icon name="${name}" size="36"></app-icon></button>`).join("")}
      </div>
      <div class="tray">
        <button class="item" type="button" aria-label="up"><app-icon name="up" size="18"></app-icon></button>
        <button class="item" type="button" aria-label="qq"><app-icon name="qq"></app-icon></button>
        <button class="item mic" type="button" aria-label="mic"><app-icon name="mic"></app-icon></button>
        <button class="ime" type="button">中</button>
        <button class="ime" type="button">拼</button>
        <button type="button" aria-label="wifi"><app-icon name="wifi"></app-icon></button>
        <button type="button" aria-label="volume"><app-icon name="volume"></app-icon></button>
        <button type="button" aria-label="battery"><app-icon name="battery"></app-icon></button>
        <div class="clock"><div>23:42</div><div>2023/10/24</div></div>
        <button type="button" aria-label="bell"><app-icon name="bell"></app-icon></button>
      </div>
    `;
  }
}
customElements.define("task-bar", TaskBar);

// SVG text, because the outline needs round joins
class VideoCaption extends HTMLElement {
  constructor() {
    super();
    this.attachShadow({ mode: "open" });
  }

  connectedCallback() {
    this.shadowRoot.innerHTML = `
      <style>
        :host { position: absolute; left: 0; right: 0; bottom: 90px; pointer-events: none; }
        svg { display: block; width: 100%; height: 112px; overflow: visible; }
        text {
          font-family: "Noto Sans CJK SC", sans-serif;
          font-size: 89px;
          font-weight: 700;
          text-anchor: middle;
          fill: #ffe600;
          stroke: #000;
          stroke-width: 14px;
          stroke-linejoin: round;
          paint-order: stroke fill;
        }
      </style>
      <svg><text x="50%" y="88">${this.getAttribute("text")}</text></svg>
    `;
  }
}
customElements.define("video-caption", VideoCaption);
</script>
</body>
</html>
